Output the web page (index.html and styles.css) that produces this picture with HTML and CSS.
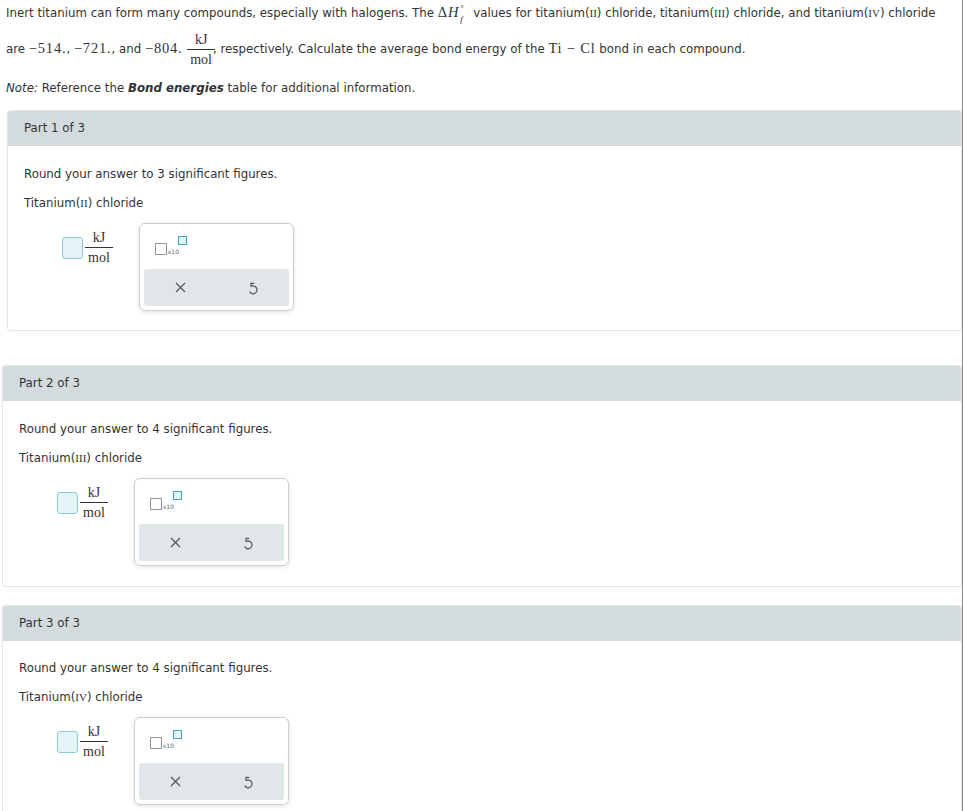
FILE: index.html
```html
<!DOCTYPE html>
<html lang="en">
<head>
    <meta charset="UTF-8">
    <title>Bond energy of Ti–Cl</title>
    <link rel="stylesheet" href="styles.css">
</head>
<body>
<div class="page">
    <div class="intro">
        <p class="problem">Inert titanium can form many compounds, especially with halogens. The <span class="math">Δ<i>H</i><span class="subsup"><span class="sup">°</span><span class="sub"><i>f</i></span></span></span> values for titanium(<span class="rn">II</span>) chloride, titanium(<span class="rn">III</span>) chloride, and titanium(<span class="rn">IV</span>) chloride<br>are <span class="math">−514.</span>, <span class="math">−721.</span>, and <span class="math">−804.</span> <span class="frac"><span class="num">kJ</span><span class="den">mol</span></span>, respectively. Calculate the average bond energy of the <span class="math">Ti − Cl</span> bond in each compound.</p>
        <p class="note"><i>Note:</i> Reference the <b><i>Bond energies</i></b> table for additional information.</p>
    </div>

    <section class="part part-1">
        <div class="part-head">Part 1 of 3</div>
        <div class="part-body">
            <p>Round your answer to 3 significant figures.</p>
            <p>Titanium(<span class="rn">II</span>) chloride</p>
            <div class="answer">
                <div class="unit">
                    <span class="box"></span>
                    <span class="frac"><span class="num">kJ</span><span class="den">mol</span></span>
                </div>
                <div class="pad">
                    <div class="pad-top">
                        <span class="sci"><span class="sci-base"></span><span class="sci-x">x10</span><span class="sci-exp"></span></span>
                    </div>
                    <div class="pad-actions">
                        <button class="pad-btn"><svg width="11" height="11" viewBox="0 0 11 11"><path d="M1 1L10 10M10 1L1 10" stroke="#555" stroke-width="1.2" fill="none"/></svg></button>
                        <button class="pad-btn"><svg width="12" height="14" viewBox="0 0 12 14"><path d="M4 5.6A3.9 3.9 0 1 1 2.6 10.6" stroke="#555" stroke-width="1.2" fill="none"/><path d="M7.2 2.4L4 2.4L4 5.8" stroke="#555" stroke-width="1.2" fill="none"/></svg></button>
                    </div>
                </div>
            </div>
        </div>
    </section>

    <section class="part part-2">
        <div class="part-head">Part 2 of 3</div>
        <div class="part-body">
            <p>Round your answer to 4 significant figures.</p>
            <p>Titanium(<span class="rn">III</span>) chloride</p>
            <div class="answer">
                <div class="unit">
                    <span class="box"></span>
                    <span class="frac"><span class="num">kJ</span><span class="den">mol</span></span>
                </div>
                <div class="pad">
                    <div class="pad-top">
                        <span class="sci"><span class="sci-base"></span><span class="sci-x">x10</span><span class="sci-exp"></span></span>
                    </div>
                    <div class="pad-actions">
                        <button class="pad-btn"><svg width="11" height="11" viewBox="0 0 11 11"><path d="M1 1L10 10M10 1L1 10" stroke="#555" stroke-width="1.2" fill="none"/></svg></button>
                        <button class="pad-btn"><svg width="12" height="14" viewBox="0 0 12 14"><path d="M4 5.6A3.9 3.9 0 1 1 2.6 10.6" stroke="#555" stroke-width="1.2" fill="none"/><path d="M7.2 2.4L4 2.4L4 5.8" stroke="#555" stroke-width="1.2" fill="none"/></svg></button>
                    </div>
                </div>
            </div>
        </div>
    </section>

    <section class="part part-3">
        <div class="part-head">Part 3 of 3</div>
        <div class="part-body">
            <p>Round your answer to 4 significant figures.</p>
            <p>Titanium(<span class="rn">IV</span>) chloride</p>
            <div class="answer">
                <div class="unit">
                    <span class="box"></span>
                    <span class="frac"><span class="num">kJ</span><span class="den">mol</span></span>
                </div>
                <div class="pad">
                    <div class="pad-top">
                        <span class="sci"><span class="sci-base"></span><span class="sci-x">x10</span><span class="sci-exp"></span></span>
                    </div>
                    <div class="pad-actions">
                        <button class="pad-btn"><svg width="11" height="11" viewBox="0 0 11 11"><path d="M1 1L10 10M10 1L1 10" stroke="#555" stroke-width="1.2" fill="none"/></svg></button>
                        <button class="pad-btn"><svg width="12" height="14" viewBox="0 0 12 14"><path d="M4 5.6A3.9 3.9 0 1 1 2.6 10.6" stroke="#555" stroke-width="1.2" fill="none"/><path d="M7.2 2.4L4 2.4L4 5.8" stroke="#555" stroke-width="1.2" fill="none"/></svg></button>
                    </div>
                </div>
            </div>
        </div>
    </section>
</div>
</body>
</html>
```
FILE: styles.css
```css
:root {
    --text: #333333;
    --head-bg: #d4dbde;
    --card-border: #e3e7e9;
    --pad-border: #c9cfd2;
    --pad-bar: #e1e6e8;
    --box-bg: #e3f3f7;
    --box-border: #8ecad6;
}
body {
    margin: 0;
    font-family: 'DejaVu Sans', Verdana, sans-serif;
    font-size: 11.8px;
    color: var(--text);
    background-color: #ffffff;
}
.page {
    width: 962px;
    min-height: 811px;
    border-right: 1px solid #8a8a8a;
    overflow: hidden;
}
p {
    margin: 0;
}
.intro {
    padding: 5px 0 0 6px;
}
.problem {
    line-height: 35px;
    margin-top: -10px;
}
.problem .frac {
    margin-left: 4px;
}
.note {
    margin-top: 14px;
    line-height: 14px;
}
.math {
    font-family: 'Liberation Serif', 'Times New Roman', serif;
    font-size: 14.5px;
    letter-spacing: 0.8px;
}
.rn {
    font-family: 'Liberation Serif', 'Times New Roman', serif;
    font-size: 11px;
}
.subsup {
    display: inline-flex;
    flex-direction: column;
    vertical-align: middle;
    font-size: 9px;
    line-height: 11px;
    margin-left: 1px;
    margin-right: 5px;
}
.frac {
    display: inline-flex;
    flex-direction: column;
    align-items: center;
    vertical-align: middle;
    font-family: 'Liberation Serif', 'Times New Roman', serif;
    font-size: 14px;
    line-height: 15px;
    margin-right: 1px;
}
.frac .num {
    border-bottom: 1px solid #333;
    padding: 0 3px 2px;
    width: 100%;
    text-align: center;
}
.frac .den {
    padding-top: 2px;
}

/* parts */
.part {
    border: 1px solid var(--card-border);
    border-radius: 3px;
    overflow: hidden;
}
.part-1 {
    margin: 15px 0 0 7px;
}
.part-1 .part-body {
    padding-bottom: 19px;
}
.part-2 {
    margin: 34px 0 0 2px;
}
.part-2 .part-body {
    padding-bottom: 20px;
}
.part-3 {
    margin: 18px 0 0 2px;
}
.part-head {
    background-color: var(--head-bg);
    height: 35px;
    line-height: 35px;
    padding-left: 16px;
}
.part-body {
    padding: 21px 16px 18px;
}
.part-body p {
    line-height: 14px;
    margin-bottom: 15px;
}
.part-3 .part-body {
    padding-top: 20px;
}

/* answer area */
.answer {
    display: flex;
    align-items: flex-start;
    gap: 28px;
    padding-left: 38px;
    margin-top: -2px;
}
.unit {
    display: flex;
    align-items: center;
    gap: 5px;
    margin-top: 7px;
}
.box {
    width: 19px;
    height: 20px;
    background-color: var(--box-bg);
    border: 1.5px solid var(--box-border);
    border-radius: 3px;
}
.pad {
    width: 145px;
    height: 82px;
    border: 1px solid var(--pad-border);
    border-radius: 6px;
    box-shadow: 0 1px 4px rgba(0, 0, 0, 0.12);
    padding: 0 4px 4px;
    display: flex;
    flex-direction: column;
}
.pad-top {
    height: 45px;
    padding: 12px 0 0 11px;
    box-sizing: border-box;
}
.sci {
    display: flex;
    align-items: flex-end;
    height: 19px;
}
.sci-base {
    width: 10px;
    height: 10px;
    border: 1.5px solid #8c979b;
}
.sci-x {
    font-size: 6px;
    color: #666;
    line-height: 6px;
    margin-left: 1px;
}
.sci-exp {
    width: 7px;
    height: 7px;
    border: 1.5px solid #3fa9bd;
    background-color: #e2f4f8;
    align-self: flex-start;
    margin-left: -1px;
}
.pad-actions {
    flex: 1;
    display: flex;
    background-color: var(--pad-bar);
    border-radius: 3px;
}
.pad-btn {
    flex: 1;
    border: none;
    background: transparent;
    display: flex;
    align-items: center;
    justify-content: center;
    padding: 0;
}
```
